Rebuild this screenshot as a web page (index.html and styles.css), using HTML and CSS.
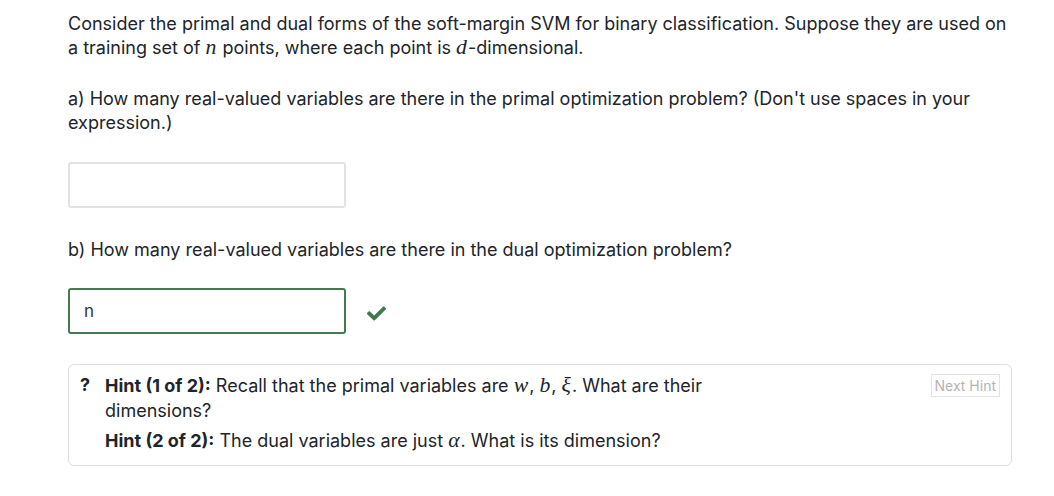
FILE: index.html
```html
<!DOCTYPE html>
<html>
<head>
<meta charset="utf-8">
<link rel="stylesheet" href="styles.css">
</head>
<body>
<div class="question">
  <p class="intro">Consider the primal and dual forms of the soft-margin SVM for binary classification. Suppose they are used on a training set of <span class="m">n</span> points, where each point is <span class="m">d</span>-dimensional.</p>
  <p class="part">a) How many real-valued variables are there in the primal optimization problem? (Don't use spaces in your expression.)</p>
  <div class="answer-row">
    <div class="input empty"></div>
  </div>
  <p class="part part-b">b) How many real-valued variables are there in the dual optimization problem?</p>
  <div class="answer-row">
    <div class="input correct">n</div>
    <svg class="check" viewBox="0 0 512 512" width="19" height="19"><path fill="#3f7a4f" d="M173.9 439.4l-166.4-166.4c-10-10-10-26.2 0-36.2l36.2-36.2c10-10 26.2-10 36.2 0L192 312.7 432.1 72.6c10-10 26.2-10 36.2 0l36.2 36.2c10 10 10 26.2 0 36.2L210.1 439.4c-10 10-26.2 10-36.2 0z"/></svg>
  </div>
  <div class="hint-box">
    <div class="hint-mark">?</div>
    <div class="hint-body">
      <p class="hint-line"><b>Hint (1 of 2):</b> Recall that the primal variables are <span class="m">w</span>, <span class="m">b</span>, <span class="m">ξ</span>. What are their dimensions?</p>
      <p class="hint-line second"><b>Hint (2 of 2):</b> The dual variables are just <span class="m">α</span>. What is its dimension?</p>
    </div>
    <div class="hint-actions">
      <span class="next-hint">Next Hint</span>
    </div>
  </div>
</div>
</body>
</html>
```
FILE: styles.css
```css
html, body {
  margin: 0;
  padding: 0;
  background: #ffffff;
}
body {
  font-family: Inter, "Noto Sans", "Liberation Sans", sans-serif;
  font-size: 18px;
  line-height: 24px;
  color: #212529;
}
.question {
  padding: 12px 42px 0 68px;
}
p {
  margin: 0;
}
.m {
  font-family: "Liberation Serif", "DejaVu Serif", serif;
  font-style: italic;
  font-size: 1.21em;
  line-height: 1;
  padding-right: 1px;
}
.intro {
  margin-bottom: 27px;
}
.part {
  width: 930px;
}
.answer-row {
  display: flex;
  align-items: center;
  margin-top: 27px;
}
.part-b {
  margin-top: 30px;
}
.input {
  box-sizing: border-box;
  width: 278px;
  height: 46px;
  border-radius: 3px;
  background: #fff;
  padding: 0 14px;
  display: flex;
  align-items: center;
  font-size: 17px;
  color: #333;
}
.input.empty {
  border: 2px solid #e2e2e2;
}
.input.correct {
  border: 2px solid #45794f;
  margin-top: -1px;
}
.check {
  margin-left: 21px;
  margin-top: 4px;
}
.hint-box {
  box-sizing: border-box;
  margin-top: 30px;
  width: 944px;
  border: 1px solid #dddddd;
  border-radius: 6px;
  padding: 8px 11px 12px 11px;
  display: flex;
  align-items: flex-start;
}
.hint-mark {
  font-weight: 700;
  width: 25px;
  flex: none;
}
.hint-body {
  width: 625px;
  flex: none;
}
.hint-line {
  line-height: 25px;
}
.hint-line.second {
  margin-top: 5px;
}
.hint-actions {
  margin-left: auto;
}
.next-hint {
  display: inline-block;
  border: 1px solid #e3e3e3;
  color: #b3b3b3;
  font-size: 14px;
  line-height: 21px;
  padding: 0 3px;
}
```
